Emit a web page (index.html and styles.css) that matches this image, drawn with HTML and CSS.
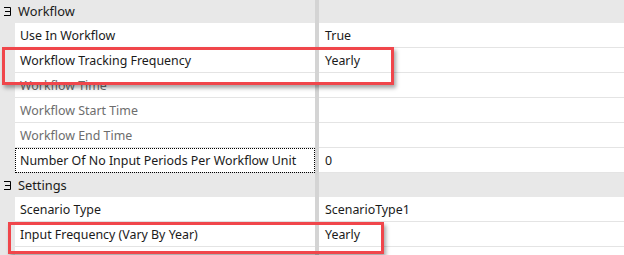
FILE: index.html
```html
<!DOCTYPE html>
<html>
<head>
    <title>Property Grid</title>
    <link rel="stylesheet" href="styles.css">
</head>
<body>
    <div class="grid">
        <div class="category">
            <span class="toggle">
                <svg width="8" height="9" viewBox="0 0 8 9"><path d="M0 0.5H6.5V8.5H0M1 4.5H6" fill="none" stroke="#000" stroke-width="1"/></svg>
            </span>
            <span class="cat-name">Workflow</span>
            <span class="splitter"></span>
        </div>
        <div class="row">
            <div class="gutter"></div>
            <div class="name">Use In Workflow</div>
            <div class="splitter"></div>
            <div class="value">True</div>
        </div>
        <div class="row">
            <div class="gutter"></div>
            <div class="name">Workflow Tracking Frequency</div>
            <div class="splitter"></div>
            <div class="value">Yearly</div>
        </div>
        <div class="row">
            <div class="gutter"></div>
            <div class="name disabled">Workflow Time</div>
            <div class="splitter"></div>
            <div class="value"></div>
        </div>
        <div class="row">
            <div class="gutter"></div>
            <div class="name disabled">Workflow Start Time</div>
            <div class="splitter"></div>
            <div class="value"></div>
        </div>
        <div class="row">
            <div class="gutter"></div>
            <div class="name disabled">Workflow End Time</div>
            <div class="splitter"></div>
            <div class="value"></div>
        </div>
        <div class="row">
            <div class="gutter"></div>
            <div class="name focused">Number Of No Input Periods Per Workflow Unit</div>
            <div class="splitter"></div>
            <div class="value">0</div>
        </div>
        <div class="category">
            <span class="toggle">
                <svg width="8" height="9" viewBox="0 0 8 9"><path d="M0 0.5H6.5V8.5H0M1 4.5H6" fill="none" stroke="#000" stroke-width="1"/></svg>
            </span>
            <span class="cat-name">Settings</span>
            <span class="splitter"></span>
        </div>
        <div class="row">
            <div class="gutter"></div>
            <div class="name">Scenario Type</div>
            <div class="splitter"></div>
            <div class="value">ScenarioType1</div>
        </div>
        <div class="row">
            <div class="gutter"></div>
            <div class="name">Input Frequency (Vary By Year)</div>
            <div class="splitter"></div>
            <div class="value">Yearly</div>
        </div>
        <div class="row">
            <div class="gutter"></div>
            <div class="name"></div>
            <div class="splitter"></div>
            <div class="value"></div>
        </div>

        <div class="mark mark-1"></div>
        <div class="mark mark-2"></div>
    </div>
</body>
</html>
```

FILE: styles.css
```css
body {
    margin: 0;
    background-color: #e8e8e8;
    font-family: "Noto Sans", "Open Sans", sans-serif;
    font-size: 12.4px;
    color: #1a1a1a;
    overflow: hidden;
}
.grid {
    position: relative;
    margin-top: -1px;
    width: 624px;
}
.category {
    display: grid;
    grid-template-columns: 15px 300px 4px 1fr;
    height: 24px;
    align-items: center;
    background-color: #e8e8e8;
}
.category .splitter {
    grid-column: 3;
    align-self: stretch;
}
.toggle {
    display: flex;
    padding-left: 4px;
    padding-top: 1px;
}
.cat-name {
    padding-left: 3px;
    font-size: 12.8px;
}
.row {
    display: grid;
    grid-template-columns: 15px 300px 4px 1fr;
    height: 25px;
}
.gutter {
    background-color: #e8e8e8;
}
.splitter {
    background-color: #d4d4d4;
}
.name, .value {
    background-color: #fff;
    border-bottom: 1px solid #e4e4e4;
    display: flex;
    align-items: center;
    white-space: nowrap;
}
.name {
    padding-left: 5px;
}
.value {
    padding-left: 6px;
}
.disabled {
    color: #6d6d6d;
}
.focused {
    outline: 1px dotted #000;
    outline-offset: -1px;
}
.mark {
    position: absolute;
    border: 3px solid #f0464b;
    box-shadow: 2px 3px 4px rgba(0, 0, 0, 0.35);
}
.mark-1 {
    left: 2px;
    top: 48px;
    width: 386px;
    height: 32px;
}
.mark-2 {
    left: 8px;
    top: 223px;
    width: 370px;
    height: 26px;
}
```
